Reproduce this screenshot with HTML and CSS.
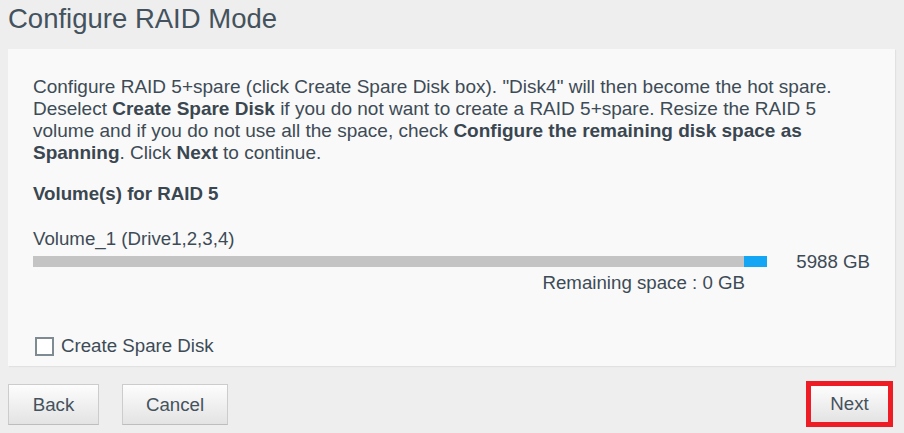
FILE: index.html
```html
<!DOCTYPE html>
<html lang="en">
<head>
    <meta charset="UTF-8">
    <title>Configure RAID Mode</title>
    <link rel="stylesheet" href="styles.css">
</head>
<body>
    <h1 class="title">Configure RAID Mode</h1>

    <div class="panel">
        <p class="intro">
            Configure RAID 5+spare (click Create Spare Disk box). "Disk4" will then become the hot spare.
            Deselect <b>Create Spare Disk</b> if you do not want to create a RAID 5+spare. Resize the RAID 5
            volume and if you do not use all the space, check <b>Configure the remaining disk space as
            Spanning</b>. Click <b>Next</b> to continue.
        </p>

        <h3 class="section">Volume(s) for RAID 5</h3>

        <div class="volume">
            <div class="vol-name">Volume_1 (Drive1,2,3,4)</div>
            <div class="vol-row">
                <div class="bar">
                    <div class="bar-used"></div>
                    <div class="bar-handle"></div>
                </div>
                <span class="vol-size">5988 GB</span>
            </div>
            <div class="remaining">Remaining space : 0 GB</div>
        </div>

        <label class="check">
            <span class="box"></span>
            Create Spare Disk
        </label>
    </div>

    <div class="footer">
        <button class="btn back">Back</button>
        <button class="btn cancel">Cancel</button>
        <span class="spacer"></span>
        <span class="highlight"><button class="btn next">Next</button></span>
    </div>
</body>
</html>
```

FILE: styles.css
```css
body {
    margin: 0;
    background-color: #eeeeee;
    font-family: "Liberation Sans", Arial, sans-serif;
    color: #3d4b56;
}

.title {
    margin: 0;
    padding: 3px 8px 0;
    height: 46px;
    font-size: 27.5px;
    line-height: 32px;
    font-weight: normal;
    color: #44525d;
    box-sizing: border-box;
}

.panel {
    margin: 3px 9px 0 8px;
    height: 317px;
    padding: 27px 25px 0;
    background-color: #f9f9f9;
    box-shadow: 1px 1px 1px rgba(0,0,0,0.05);
    box-sizing: border-box;
}

.intro {
    margin: 0;
    font-size: 19px;
    line-height: 22px;
    width: 825px;
}

.intro b {
    color: #3a4650;
}

.section {
    margin: 19px 0 0;
    font-size: 18.7px;
    line-height: 22px;
    color: #3a4650;
}

.volume {
    margin-top: 23px;
}

.vol-name {
    font-size: 18.7px;
    line-height: 22px;
}

.vol-row {
    display: flex;
    align-items: center;
    height: 11px;
    margin-top: 6px;
}

.bar {
    display: flex;
    width: 735px;
    height: 11px;
    background-color: #c4c4c4;
}

.bar-used {
    flex: 1;
}

.bar-handle {
    width: 23px;
    background-color: #12a6f5;
}

.vol-size {
    margin-left: 29px;
    font-size: 18.7px;
    line-height: 22px;
    white-space: nowrap;
}

.remaining {
    width: 712px;
    text-align: right;
    font-size: 18.7px;
    line-height: 22px;
    margin-top: 5px;
}

.check {
    display: flex;
    align-items: center;
    height: 22px;
    margin-top: 41px;
    margin-left: 2px;
    font-size: 18.7px;
}

.box {
    width: 15px;
    height: 15px;
    border: 2px solid #7e8b93;
    background-color: #fff;
    margin-right: 7px;
}

.footer {
    display: flex;
    align-items: flex-start;
    padding: 18px 11px 0 8px;
    gap: 23px;
}

.spacer {
    flex: 1;
}

.btn {
    height: 41px;
    padding: 0;
    font-family: "Liberation Sans", Arial, sans-serif;
    font-size: 18.7px;
    color: #44525d;
    text-align: center;
    border: 1px solid #cccccc;
    border-bottom-color: #bdbdbd;
    background: linear-gradient(#fdfdfd, #e3e3e3);
    border-radius: 0;
}

.back {
    width: 91px;
}

.cancel {
    width: 106px;
}

.highlight {
    margin-top: -3px;
    border: 5px solid #ee1c25;
    line-height: 0;
}

.next {
    width: 77px;
    height: 36px;
    border: none;
}
```
